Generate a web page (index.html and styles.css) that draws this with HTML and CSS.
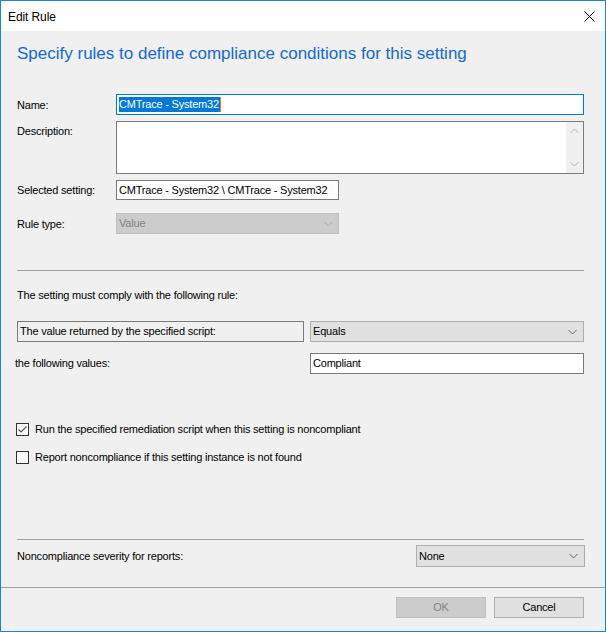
FILE: index.html
```html
<!DOCTYPE html>
<html>
<head>
<meta charset="utf-8">
<title>Edit Rule</title>
<link rel="stylesheet" href="styles.css">
</head>
<body>
<div class="window">
  <div class="titlebar">
    <span class="title">Edit Rule</span>
    <svg class="close" width="11" height="11" viewBox="0 0 11 11"><path d="M0.5 0.5 L10.5 10.5 M10.5 0.5 L0.5 10.5" stroke="#000" stroke-width="1" fill="none"/></svg>
  </div>
  <div class="content">
    <h1 class="heading">Specify rules to define compliance conditions for this setting</h1>

    <div class="row row-name">
      <label class="label">Name:</label>
      <div class="input focused"><span class="selected">CMTrace - System32</span><span class="caret"></span></div>
    </div>

    <div class="row row-desc">
      <label class="label label-top">Description:</label>
      <div class="textarea">
        <div class="scroll">
          <svg width="9" height="6" viewBox="0 0 9 6"><polyline points="0.5,5 4.5,1 8.5,5" fill="none" stroke="#b4b4b4" stroke-width="1"/></svg>
          <svg width="9" height="6" viewBox="0 0 9 6"><polyline points="0.5,1 4.5,5 8.5,1" fill="none" stroke="#b4b4b4" stroke-width="1"/></svg>
        </div>
      </div>
    </div>

    <div class="row row-sel">
      <label class="label">Selected setting:</label>
      <div class="readonly short">CMTrace - System32 \ CMTrace - System32</div>
    </div>

    <div class="row row-type">
      <label class="label">Rule type:</label>
      <div class="combo disabled short"><span>Value</span>
        <svg class="chev" width="9" height="6" viewBox="0 0 9 6"><polyline points="0.5,1 4.5,5 8.5,1" fill="none" stroke="#a8a8a8" stroke-width="1"/></svg>
      </div>
    </div>

    <div class="sep sep-1"></div>

    <p class="text rule-label">The setting must comply with the following rule:</p>

    <div class="pair pair-rule">
      <div class="readonly gray">The value returned by the specified script:</div>
      <div class="combo"><span>Equals</span>
        <svg class="chev" width="9" height="6" viewBox="0 0 9 6"><polyline points="0.5,1 4.5,5 8.5,1" fill="none" stroke="#606060" stroke-width="1"/></svg>
      </div>
    </div>

    <div class="pair pair-values">
      <label class="label label-values">the following values:</label>
      <div class="input plain">Compliant</div>
    </div>

    <div class="check check-1">
      <span class="box"><svg width="11" height="11" viewBox="0 0 11 11"><polyline points="1.5,5.5 4,8 9.5,2.5" fill="none" stroke="#555" stroke-width="1.1"/></svg></span>
      <span class="text">Run the specified remediation script when this setting is noncompliant</span>
    </div>
    <div class="check check-2">
      <span class="box"></span>
      <span class="text">Report noncompliance if this setting instance is not found</span>
    </div>

    <div class="sep sep-2"></div>

    <div class="severity">
      <label class="label">Noncompliance severity for reports:</label>
      <div class="combo sev"><span>None</span>
        <svg class="chev" width="9" height="6" viewBox="0 0 9 6"><polyline points="0.5,1 4.5,5 8.5,1" fill="none" stroke="#606060" stroke-width="1"/></svg>
      </div>
    </div>
  </div>
  <div class="footer">
    <button class="btn btn-disabled" disabled>OK</button>
    <button class="btn">Cancel</button>
  </div>
</div>
</body>
</html>
```

FILE: styles.css
```css
* { box-sizing: border-box; }
html, body { margin: 0; padding: 0; background: #ffffff; }
body {
  font-family: "Liberation Sans", Arial, sans-serif;
  font-size: 11px;
  letter-spacing: -0.2px;
  color: #000;
}
.window {
  width: 606px;
  height: 632px;
  border: 1px solid #1883d7;
  display: flex;
  flex-direction: column;
  background: #f0f0f0;
}
.titlebar {
  height: 30px;
  flex: none;
  background: #ffffff;
  display: flex;
  align-items: center;
  justify-content: space-between;
  padding: 0 10px 0 7px;
}
.title {
  font-size: 12px;
  letter-spacing: -0.1px;
  color: #000;
  margin-top: 1px;
}
.close { display: block; margin-top: 1px; }

.content {
  flex: 1;
  padding: 0 21px 0 16px;
  display: flex;
  flex-direction: column;
}
.heading {
  margin: 12px 0 0 0;
  font-size: 17px;
  line-height: 21px;
  letter-spacing: 0;
  font-weight: normal;
  color: #1569d4;
}
.label { display: block; line-height: 14px; }
.text { line-height: 14px; }

.row {
  display: grid;
  grid-template-columns: 99px auto;
  align-items: center;
  justify-items: start;
}
.row > .input, .row > .textarea { justify-self: stretch; }
.row-name { margin-top: 30px; }
.row-desc { margin-top: 6px; align-items: start; }
.label-top { padding-top: 3px; }
.row-sel { margin-top: 6px; }
.row-type { margin-top: 13px; }

.input {
  height: 21px;
  background: #fff;
  border: 1px solid #7a7a7a;
  padding: 0 2px 1px 2px;
  display: flex;
  align-items: center;
  line-height: 14px;
}
.input.focused { border-color: #0078d7; }
.selected {
  background: #0078d7;
  color: #fff;
  line-height: 15px;
  padding-right: 1px;
}
.caret {
  width: 1px;
  height: 15px;
  background: #e8761e;
}
.textarea {
  height: 53px;
  background: #fff;
  border: 1px solid #7a7a7a;
  display: flex;
  justify-content: flex-end;
}
.scroll {
  width: 17px;
  background: #f0f0f0;
  display: flex;
  flex-direction: column;
  justify-content: space-between;
  align-items: center;
  padding: 6px 0 6px 0;
}
.scroll svg { display: block; }
.readonly {
  height: 20px;
  border: 1px solid #7a7a7a;
  padding: 0 2px 1px 2px;
  display: flex;
  align-items: center;
  background: #fff;
  white-space: nowrap;
}
.readonly.gray { background: #f0f0f0; height: 21px; }
.short { width: 223px; }

.combo {
  height: 21px;
  border: 1px solid #adadad;
  background: #e1e1e1;
  display: flex;
  align-items: center;
  justify-content: space-between;
  padding: 0 6px 0 2px;
}
.combo > span { padding-bottom: 1px; }
.combo.disabled {
  background: #cccccc;
  border-color: #bfbfbf;
  color: #838383;
  padding-right: 5px;
}
.chev { display: block; }

.sep { border-top: 1px solid #a0a0a0; height: 0; }
.sep-1 { margin-top: 36px; }
.rule-label { margin: 17px 0 0 0; }

.pair {
  display: grid;
  grid-template-columns: 287px 274px;
  column-gap: 6px;
  align-items: center;
}
.pair-rule { margin-top: 19px; }
.pair-values { margin-top: 11px; }
.label-values { margin-left: -2px; padding-bottom: 1px; }
.input.plain { padding-left: 2px; }

.check {
  display: flex;
  align-items: center;
  height: 13px;
  margin-left: -1px;
}
.check .text { margin-top: -1px; }
.check-1 { margin-top: 49px; }
.check-2 { margin-top: 15px; }
.box {
  width: 13px;
  height: 13px;
  border: 1px solid #333333;
  background: #ffffff;
  margin-right: 6px;
  display: flex;
  align-items: center;
  justify-content: center;
  flex: none;
}
.box svg { display: block; }

.sep-2 { margin-top: 75px; }
.severity {
  margin-top: 5px;
  display: flex;
  align-items: center;
  justify-content: space-between;
}
.combo.sev { width: 169px; height: 22px; margin-right: -1px; }

.footer {
  height: 44px;
  flex: none;
  border-top: 1px solid #a0a0a0;
  display: flex;
  justify-content: flex-end;
  align-items: flex-start;
  gap: 8px;
  padding: 9px 21px 0 0;
}
.btn {
  font-family: "Liberation Sans", Arial, sans-serif;
  font-size: 11px;
  letter-spacing: -0.2px;
  height: 21px;
  width: 90px;
  border: 1px solid #adadad;
  background: #e1e1e1;
  color: #000;
  padding: 0 0 1px 0;
  margin: 0;
}
.btn-disabled {
  background: #cccccc;
  border-color: #bfbfbf;
  color: #838383;
}
```
